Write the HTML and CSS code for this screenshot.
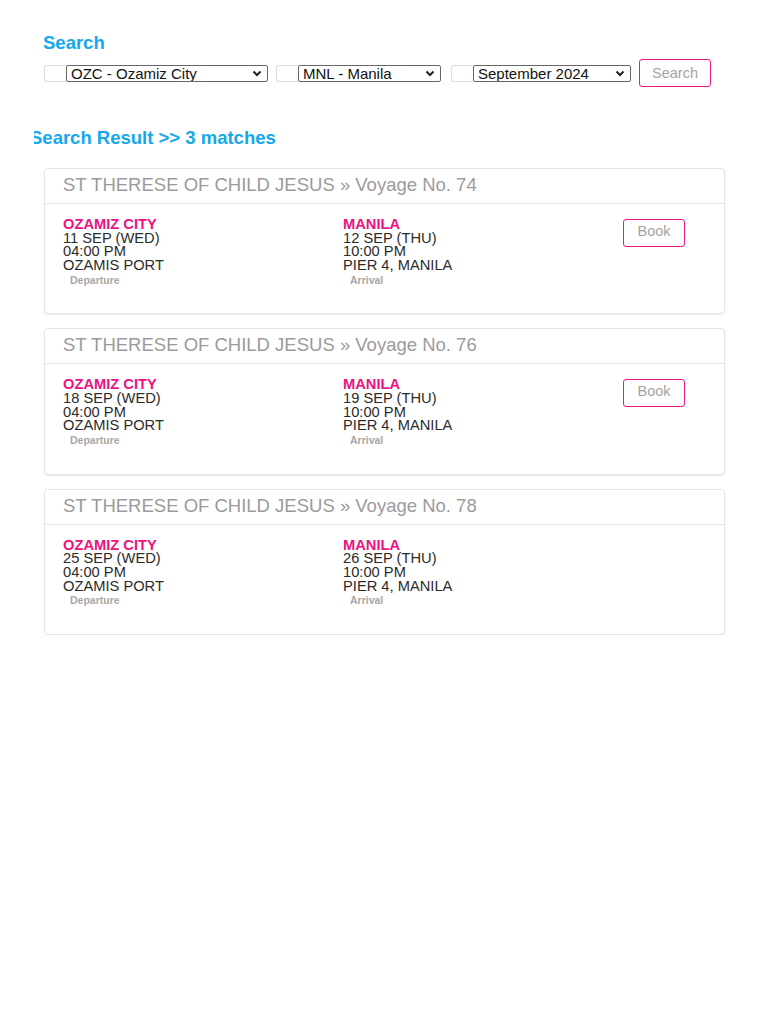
FILE: index.html
```html
<!DOCTYPE html>
<html lang="en">
<head>
    <meta charset="UTF-8">
    <meta name="viewport" content="width=device-width, initial-scale=1.0">
    <title>Search Voyages</title>
    <link rel="stylesheet" href="styles.css">
</head>
<body>

    <div class="page">
        <h2 class="search-title">Search</h2>

        <form class="search-form">
            <div class="field">
                <span class="field-addon"></span>
                <select class="origin">
                    <option>OZC - Ozamiz City</option>
                </select>
            </div>
            <div class="field">
                <span class="field-addon"></span>
                <select class="destination">
                    <option>MNL - Manila</option>
                </select>
            </div>
            <div class="field">
                <span class="field-addon"></span>
                <select class="month">
                    <option>September 2024</option>
                </select>
            </div>
            <button type="button" class="btn-outline btn-search">Search</button>
        </form>

        <div class="result-title-wrap">
            <h2 class="result-title">Search Result &gt;&gt; 3 matches</h2>
        </div>

        <div class="voyage-list">
            <!-- voyage 74 -->
            <div class="voyage-card">
                <div class="voyage-head">ST THERESE OF CHILD JESUS &raquo; Voyage No. 74</div>
                <div class="voyage-body">
                    <div class="stop">
                        <div class="stop-city">OZAMIZ CITY</div>
                        <div>11 SEP (WED)</div>
                        <div>04:00 PM</div>
                        <div>OZAMIS PORT</div>
                        <div class="stop-label">Departure</div>
                    </div>
                    <div class="stop">
                        <div class="stop-city">MANILA</div>
                        <div>12 SEP (THU)</div>
                        <div>10:00 PM</div>
                        <div>PIER 4, MANILA</div>
                        <div class="stop-label">Arrival</div>
                    </div>
                    <div class="stop-action">
                        <button type="button" class="btn-outline btn-book">Book</button>
                    </div>
                </div>
            </div>

            <!-- voyage 76 -->
            <div class="voyage-card">
                <div class="voyage-head">ST THERESE OF CHILD JESUS &raquo; Voyage No. 76</div>
                <div class="voyage-body">
                    <div class="stop">
                        <div class="stop-city">OZAMIZ CITY</div>
                        <div>18 SEP (WED)</div>
                        <div>04:00 PM</div>
                        <div>OZAMIS PORT</div>
                        <div class="stop-label">Departure</div>
                    </div>
                    <div class="stop">
                        <div class="stop-city">MANILA</div>
                        <div>19 SEP (THU)</div>
                        <div>10:00 PM</div>
                        <div>PIER 4, MANILA</div>
                        <div class="stop-label">Arrival</div>
                    </div>
                    <div class="stop-action">
                        <button type="button" class="btn-outline btn-book">Book</button>
                    </div>
                </div>
            </div>

            <!-- voyage 78 (no booking) -->
            <div class="voyage-card">
                <div class="voyage-head">ST THERESE OF CHILD JESUS &raquo; Voyage No. 78</div>
                <div class="voyage-body">
                    <div class="stop">
                        <div class="stop-city">OZAMIZ CITY</div>
                        <div>25 SEP (WED)</div>
                        <div>04:00 PM</div>
                        <div>OZAMIS PORT</div>
                        <div class="stop-label">Departure</div>
                    </div>
                    <div class="stop">
                        <div class="stop-city">MANILA</div>
                        <div>26 SEP (THU)</div>
                        <div>10:00 PM</div>
                        <div>PIER 4, MANILA</div>
                        <div class="stop-label">Arrival</div>
                    </div>
                    <div class="stop-action"></div>
                </div>
            </div>
        </div>
    </div>

</body>
</html>
```

FILE: styles.css
```css
* {
    box-sizing: border-box;
}

body {
    margin: 0;
    background-color: #fff;
    font-family: "Liberation Sans", Arial, sans-serif;
    color: #222;
}

.page {
    width: 726px;
    padding: 32px 0 0 43px;
}

.search-title,
.result-title {
    margin: 0;
    font-size: 18.5px;
    line-height: 22px;
    font-weight: bold;
    color: #16a8ea;
}

/* search bar */
.search-form {
    display: flex;
    align-items: center;
    margin-top: 5px;
    height: 28px;
}

.field {
    display: flex;
    align-items: center;
    margin-right: 8px;
}

.field:first-child {
    margin-left: 1px;
}

.field:nth-child(2) {
    margin-right: 10px;
}

.field-addon {
    width: 22px;
    height: 17px;
    border: 1px solid #dcdcdc;
    border-right: none;
    border-radius: 3px 0 0 3px;
}

.field select {
    appearance: none;
    -webkit-appearance: none;
    height: 17px;
    padding: 0 20px 0 4px;
    border: 1px solid #666;
    border-radius: 2px;
    background-color: #fff;
    background-image: url("data:image/svg+xml;utf8,<svg xmlns='http://www.w3.org/2000/svg' width='10' height='7' viewBox='0 0 10 7'><path d='M1.5 1.5 L5 5 L8.5 1.5' fill='none' stroke='%23222' stroke-width='2'/></svg>");
    background-repeat: no-repeat;
    background-position: right 5px center;
    font-family: "Liberation Sans", Arial, sans-serif;
    font-size: 15px;
    line-height: 15px;
    color: #111;
}

.origin { width: 202px; }
.destination { width: 143px; }
.month { width: 158px; }

.btn-outline {
    background-color: #fff;
    border: 1px solid #ec1a86;
    border-radius: 3px;
    color: #a4a4a4;
    font-family: "Liberation Sans", Arial, sans-serif;
    font-size: 14.5px;
    cursor: pointer;
}

.btn-search {
    width: 72px;
    height: 28px;
    padding: 0;
}

/* results */
.result-title-wrap {
    margin: 40px 0 0 -9px;
    overflow: hidden;
}

.result-title {
    margin-left: -4px;
    white-space: nowrap;
}

.voyage-list {
    margin-top: 19px;
    margin-left: 1px;
    width: 681px;
    display: flex;
    flex-direction: column;
    gap: 14px;
}

.voyage-card {
    border: 1px solid #e4e4e4;
    border-radius: 4px;
    box-shadow: 0 1px 2px rgba(0, 0, 0, 0.08);
}

.voyage-head {
    height: 35px;
    padding: 0 18px;
    border-bottom: 1px solid #e4e4e4;
    font-size: 18.5px;
    line-height: 31px;
    color: #9b9b9b;
}

.voyage-body {
    display: grid;
    grid-template-columns: 280px 280px 1fr;
    padding: 14px 18px 26.5px;
    font-size: 14.7px;
    line-height: 13.7px;
    color: #2b2b2b;
}

.stop-city {
    font-weight: bold;
    color: #ec1280;
}

.stop-label {
    margin: 0 0 0 7px;
    font-size: 10.5px;
    font-weight: bold;
    line-height: 14px;
    color: #a8a8a8;
}

.btn-book {
    width: 62px;
    height: 28px;
    margin-top: 1px;
    padding: 0 0 4px;
}
```
